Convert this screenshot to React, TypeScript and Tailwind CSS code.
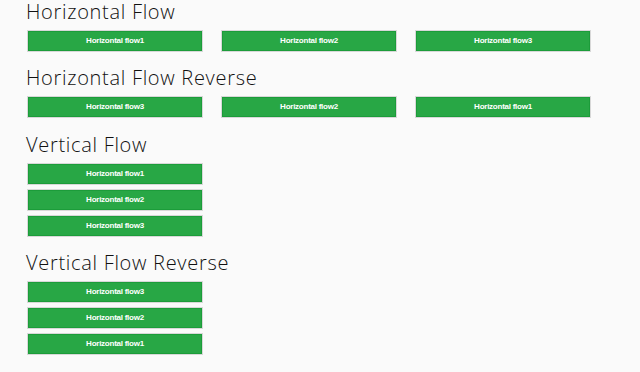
import React from "react";

const Btn = ({ label }: { label: string }) => (
  <div className="h-[22px] border border-[#d8d8d8] bg-[#28a745] shadow-[inset_0_0_0_1px_#1c9c3a] flex items-center justify-center text-white font-bold text-[8px] tracking-[-0.25px] [font-family:'Liberation_Sans',Arial,sans-serif]">
    {label}
  </div>
);

const Heading = ({ children }: { children: React.ReactNode }) => (
  <h2 className="text-[20px] leading-[24px] tracking-[0.7px] text-[#111111] font-light [font-family:'Open_Sans',Lato,sans-serif]">
    {children}
  </h2>
);

export default function App() {
  return (
    <div className="w-[640px] h-[372px] bg-[#fafafa] pl-[26px] flex flex-col gap-[14.4px] overflow-hidden">
      <section>
        <Heading>Horizontal Flow</Heading>
        <div className="mt-[6px] ml-[1px] w-[564px] grid grid-cols-3 gap-[18px]">
          <Btn label="Horizontal flow1" />
          <Btn label="Horizontal flow2" />
          <Btn label="Horizontal flow3" />
        </div>
      </section>
      <section>
        <Heading>Horizontal Flow Reverse</Heading>
        <div className="mt-[6px] ml-[1px] w-[564px] grid grid-cols-3 gap-[18px]">
          <Btn label="Horizontal flow3" />
          <Btn label="Horizontal flow2" />
          <Btn label="Horizontal flow1" />
        </div>
      </section>
      <section>
        <Heading>Vertical Flow</Heading>
        <div className="mt-[6px] ml-[1px] w-[176px] flex flex-col gap-[4px]">
          <Btn label="Horizontal flow1" />
          <Btn label="Horizontal flow2" />
          <Btn label="Horizontal flow3" />
        </div>
      </section>
      <section>
        <Heading>Vertical Flow Reverse</Heading>
        <div className="mt-[6px] ml-[1px] w-[176px] flex flex-col gap-[4px]">
          <Btn label="Horizontal flow3" />
          <Btn label="Horizontal flow2" />
          <Btn label="Horizontal flow1" />
        </div>
      </section>
    </div>
  );
}
